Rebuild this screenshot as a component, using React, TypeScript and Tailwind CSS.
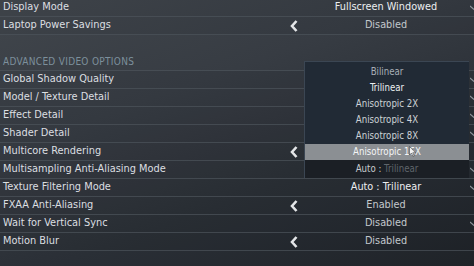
import React from "react";

type Row = {
  label: string;
  value?: string;
  kind: "drop" | "toggle" | "none";
  bright?: boolean;
};

const topRows: Row[] = [
  { label: "Display Mode", value: "Fullscreen Windowed", kind: "drop", bright: true },
  { label: "Laptop Power Savings", value: "Disabled", kind: "toggle" },
];

const advRows: Row[] = [
  { label: "Global Shadow Quality", kind: "drop" },
  { label: "Model / Texture Detail", kind: "drop" },
  { label: "Effect Detail", kind: "drop" },
  { label: "Shader Detail", kind: "drop" },
  { label: "Multicore Rendering", kind: "toggle" },
  { label: "Multisampling Anti-Aliasing Mode", kind: "drop" },
  { label: "Texture Filtering Mode", value: "Auto : Trilinear", kind: "drop", bright: true },
  { label: "FXAA Anti-Aliasing", value: "Enabled", kind: "toggle" },
  { label: "Wait for Vertical Sync", value: "Disabled", kind: "drop" },
  { label: "Motion Blur", value: "Disabled", kind: "toggle" },
];

const font = { fontFamily: '"DejaVu Sans Condensed", "Liberation Sans Narrow", "Liberation Sans", sans-serif' };

function LeftChevron() {
  return (
    <svg width="8" height="12" viewBox="0 0 8 12">
      <polyline points="6.5,1 2,6 6.5,11" fill="none" stroke="#e4e6e8" strokeWidth="2.6" strokeLinejoin="miter" />
    </svg>
  );
}

function EdgeArrow() {
  return (
    <svg width="4" height="6" viewBox="0 0 4 6">
      <polyline points="0,1 4,4.5" fill="none" stroke="#8d939a" strokeWidth="1.2" />
    </svg>
  );
}

function SettingRow({ row }: { row: Row }) {
  return (
    <div className="flex h-[18px] items-center border-b border-[#4d545b]/70 bg-black/[0.04]">
      <div className="w-[286px] pl-[3px] text-[10.9px] leading-none text-[#dcdfe1] whitespace-nowrap">{row.label}</div>
      <div className="flex w-[16px] items-center justify-center">
        {row.kind === "toggle" ? <LeftChevron /> : null}
      </div>
      <div
        className={`flex-1 text-center text-[10.8px] leading-none whitespace-nowrap ${
          row.bright ? "text-[#eceef0]" : "text-[#c3c8cc]"
        }`}
      >
        {row.value ?? ""}
      </div>
      <div className="flex w-[4px] items-center overflow-hidden">
        {row.kind === "drop" ? <EdgeArrow /> : null}
      </div>
    </div>
  );
}

const items = [
  { t: "Bilinear", c: "text-[#a7aeb5]" },
  { t: "Trilinear", c: "text-[#eceef0]" },
  { t: "Anisotropic 2X", c: "text-[#cdd2d6]" },
  { t: "Anisotropic 4X", c: "text-[#cdd2d6]" },
  { t: "Anisotropic 8X", c: "text-[#cdd2d6]" },
];

export default function App() {
  return (
    <div
      className="relative h-[266px] w-[474px] overflow-hidden bg-[linear-gradient(160deg,#41464c_0%,#373c43_35%,#2a2f36_65%,#1f2328_100%)]"
      style={font}
    >
      <div className="-mt-[1px] flex flex-col">
        {topRows.map((r) => (
          <SettingRow key={r.label} row={r} />
        ))}
        <div className="h-[18px]" />
        <div className="flex h-[18px] items-center border-b border-[#4d545b]/70 pl-[3px] text-[10px] leading-none tracking-[0.3px] text-[#7d909c]">
          ADVANCED VIDEO OPTIONS
        </div>
        {advRows.map((r) => (
          <SettingRow key={r.label} row={r} />
        ))}
      </div>

      <div className="absolute left-[304px] top-[61px] flex h-[117px] w-[165px] flex-col border-l border-t border-[#3b4653] bg-[#212a35] pt-[2px] text-[9.6px] leading-none">
        {items.map((i) => (
          <div key={i.t} className={`flex h-[16px] items-center justify-center ${i.c}`}>
            {i.t}
          </div>
        ))}
        <div className="flex h-[16px] items-center justify-center bg-[#8b8f93] text-[#f4f5f6]">Anisotropic 16X</div>
        <div className="flex flex-1 items-start justify-center bg-[#1b1f25] pt-[4px]">
          <span className="text-[#c6cacd]">Auto :&nbsp;</span>
          <span className="text-[#5f656b]">Trilinear</span>
        </div>
      </div>

      <svg className="absolute left-[409px] top-[146px]" width="7" height="11" viewBox="0 0 7 11">
        <path d="M0.5,0.5 L0.5,9 L2.5,7 L4,10.5 L5.2,10 L3.8,6.7 L6.5,6.7 Z" fill="#f2f2f2" stroke="#333" strokeWidth="0.5" />
      </svg>
    </div>
  );
}
